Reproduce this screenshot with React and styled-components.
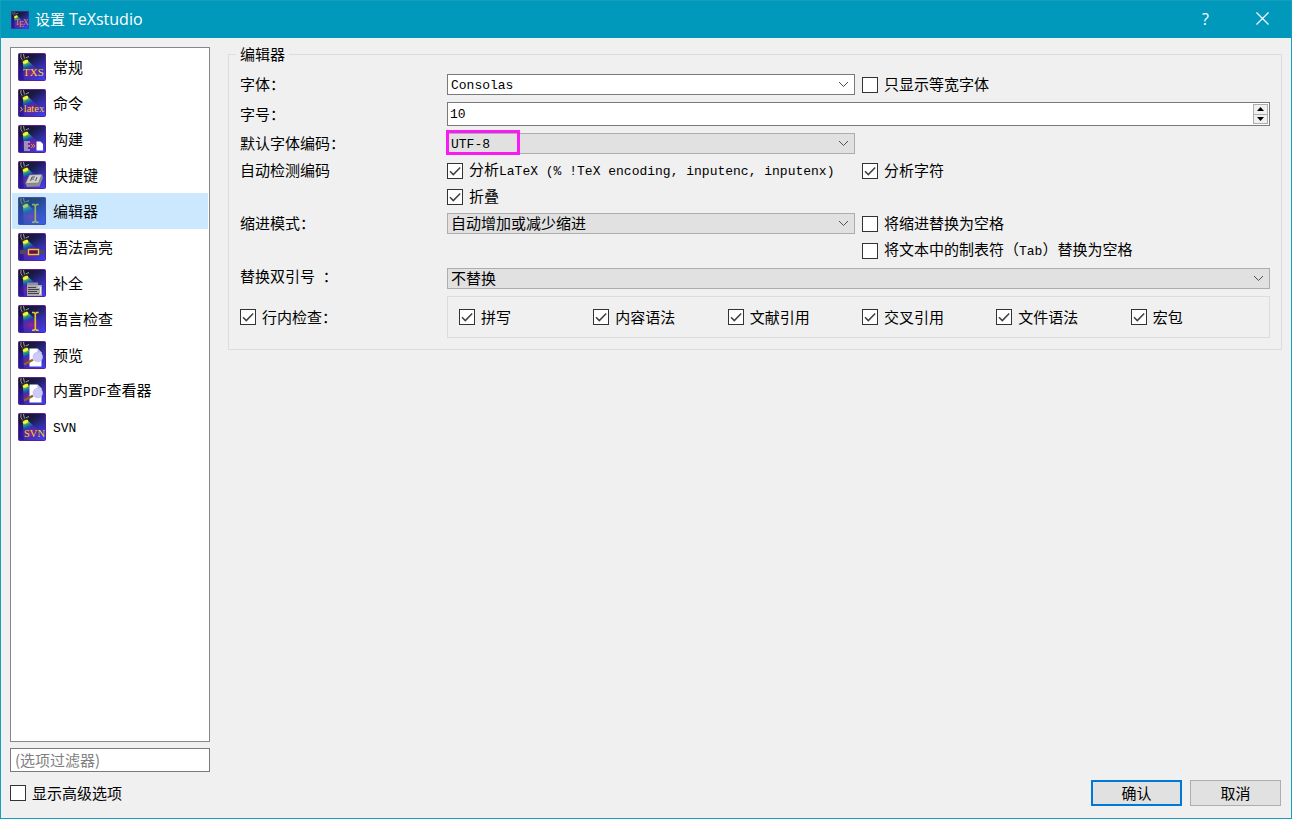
import React from "react";
import styled, { createGlobalStyle } from "styled-components";

const CJK = `"Noto Sans CJK SC", sans-serif`;
const MONO = `"Liberation Mono", "Noto Sans CJK SC", monospace`;

const GlobalStyle = createGlobalStyle`
  *, *::before, *::after { box-sizing: border-box; }
  body { margin: 0; background: #f0f0f0; }
  button, input, select { font: inherit; color: inherit; margin: 0; border-radius: 0; }
`;

const Window = styled.div`
  display: flex;
  flex-direction: column;
  min-height: 100vh;
  border: 1px solid #169fbc;
  background: #f0f0f0;
  color: #000;
  font-family: ${CJK};
  font-size: 15px;
  line-height: 19px;
`;

const TitleBar = styled.header`
  display: flex;
  align-items: center;
  height: 37px;
  padding-left: 10px;
  background: #0099bc;
  color: #fff;
`;

const Title = styled.h1`
  flex: 1;
  margin: 0 0 0 6px;
  padding-bottom: 2px;
  font: 400 15px/20px "Open Sans", ${CJK};
`;

const AppName = styled.span`
  font-size: 16px;
`;

const CaptionButton = styled.button`
  display: grid;
  place-items: center;
  width: 57px;
  height: 100%;
  padding: 0 0 2px;
  border: 0;
  background: transparent;
  font: 400 16px/20px "Open Sans", sans-serif;
`;

const Body = styled.main`
  flex: 1;
  display: flex;
  flex-direction: column;
  gap: 8px;
  padding: 9px 9px 12px;
`;

const Panels = styled.div`
  flex: 1;
  display: flex;
  gap: 18px;
`;

const Sidebar = styled.aside`
  flex: none;
  display: flex;
  flex-direction: column;
  gap: 6px;
  width: 200px;
`;

const CategoryList = styled.ul`
  flex: 1;
  margin: 0;
  padding: 1px;
  list-style: none;
  border: 1px solid #828790;
  background: #fff;
`;

const Category = styled.button`
  display: flex;
  align-items: center;
  gap: 7px;
  width: 100%;
  height: 36px;
  padding: 0 6px;
  border: 0;
  text-align: left;
  background: ${(p) => (p.$active ? "#cce8ff" : "transparent")};
`;

const Caption = styled.span`
  display: block;
  padding-bottom: 2px;
  line-height: 19px;
`;

const FilterInput = styled.input`
  width: 100%;
  height: 24px;
  padding: 0 4px 2px;
  border: 1px solid #7a7a7a;
  background: #fff;
  outline: none;
  &::placeholder { color: #808080; opacity: 1; }
`;

const Content = styled.section`
  flex: 1;
  min-width: 0;
`;

const Group = styled.fieldset`
  min-width: 0;
  margin: 0;
  padding: 12px 11px 11px;
  border: 1px solid #dcdcdc;
`;

const Legend = styled.legend`
  margin-left: -4px;
  padding: 0 4px 2px;
  line-height: 13px;
`;

const Form = styled.div`
  display: grid;
  grid-template-columns: 200px minmax(0, 1fr) minmax(0, 1fr);
  gap: 7px;
  align-items: center;
`;

const Cell = styled.div`
  position: relative;
  grid-column: ${(p) => p.$col};
  min-width: 0;
`;

const FieldLabel = styled.label`
  grid-column: 1;
  padding-bottom: 2px;
  line-height: 17px;
`;

const GroupLabel = styled.div`
  grid-column: 1;
  padding-bottom: 2px;
  line-height: 17px;
`;

const Latin = styled.span`
  font-family: ${MONO};
  font-size: 13px;
  line-height: 17px;
  white-space: pre;
`;

const SelectBox = styled.select`
  display: block;
  appearance: none;
  width: 100%;
  height: 21px;
  padding: ${(p) => (p.$latin ? "1px 24px 0 3px" : "0 24px 2px 3px")};
  border: 1px solid ${(p) => (p.$editable ? "#7a7a7a" : "#adadad")};
  background: ${(p) => (p.$editable ? "#fff" : "#e1e1e1")};
  font-family: ${(p) => (p.$latin ? MONO : CJK)};
  font-size: ${(p) => (p.$latin ? "13px" : "15px")};
  line-height: 17px;
  outline: none;
`;

const ArrowSlot = styled.span`
  position: absolute;
  top: 0;
  right: 6px;
  display: flex;
  align-items: center;
  height: 100%;
  pointer-events: none;
`;

const Highlight = styled.span`
  position: absolute;
  top: -3px;
  left: -1px;
  width: 74px;
  height: 25px;
  border: 3px solid #f81cf3;
  pointer-events: none;
`;

const Spin = styled.div`
  display: flex;
  height: 24px;
  padding: 1px;
  border: 1px solid #7a7a7a;
  background: #fff;
`;

const SpinInput = styled.input`
  flex: 1;
  min-width: 0;
  padding: 1px 1px 0;
  border: 0;
  outline: none;
  background: transparent;
  font-family: ${MONO};
  font-size: 13px;
  appearance: textfield;
  &::-webkit-inner-spin-button { appearance: none; margin: 0; }
`;

const SpinButtons = styled.div`
  display: grid;
  grid-template-rows: 1fr 1fr;
  width: 15px;
  background: #adadad;
  border: 1px solid #adadad;
  gap: 1px;
`;

const SpinButton = styled.button`
  display: grid;
  place-items: center;
  min-height: 0;
  padding: 0;
  border: 0;
  background: #f0f0f0;
`;

const CheckLabel = styled.label`
  display: flex;
  align-items: center;
  gap: 6px;
  width: fit-content;
  height: 19px;
  white-space: nowrap;
`;

const CheckInput = styled.input`
  flex: none;
  appearance: none;
  width: 16px;
  height: 16px;
  border: 1px solid #333;
  background: #fff;
`;

const CheckFrame = styled.span`
  display: grid;
  & > * { grid-area: 1 / 1; }
  & > svg { pointer-events: none; visibility: hidden; }
  & > input:checked + svg { visibility: visible; }
`;

const InlineChecks = styled.div`
  display: grid;
  grid-template-columns: repeat(6, minmax(0, 1fr));
  gap: 7px;
  align-items: center;
  height: 42px;
  padding: 0 11px;
  border: 1px solid #dcdcdc;
`;

const Footer = styled.footer`
  display: flex;
  align-items: center;
  gap: 8px;
  padding-right: 1px;
`;

const Spacer = styled.div`
  flex: 1;
`;

const DialogButton = styled.button`
  width: 91px;
  height: 26px;
  padding: 0 0 2px;
  border: ${(p) => (p.$primary ? "2px solid #0078d7" : "1px solid #adadad")};
  background: #e1e1e1;
`;

function Check({ checked, children }) {
  return (
    <CheckLabel>
      <CheckFrame>
        <CheckInput type="checkbox" defaultChecked={checked} />
        <svg width="16" height="16" viewBox="0 0 16 16" fill="none" stroke="#404040" strokeWidth="1.5" aria-hidden="true">
          <path d="M3 8.2 L6.3 11.6 L13.2 4.4" />
        </svg>
      </CheckFrame>
      <Caption>{children}</Caption>
    </CheckLabel>
  );
}

function Select({ id, value, editable, latin }) {
  return (
    <>
      <SelectBox id={id} defaultValue={value} $editable={editable} $latin={latin}>
        <option>{value}</option>
      </SelectBox>
      <ArrowSlot>
        <svg width="11" height="7" viewBox="0 0 11 7" fill="none" stroke="#505050" aria-hidden="true">
          <path d="M1 1 L5.5 5.5 L10 1" />
        </svg>
      </ArrowSlot>
    </>
  );
}

const serif = { fontFamily: "Liberation Serif, serif", fill: "#f0d428", textAnchor: "middle" };

const glyphs = {
  tex: (
    <g {...serif} fill="#d99a4d">
      <text x="10" y="22" fontSize="14">T</text>
      <text x="16.5" y="25" fontSize="13">E</text>
      <text x="23" y="22" fontSize="13">X</text>
    </g>
  ),
  txs: <text {...serif} x="15.5" y="23" fontSize="11">TXS</text>,
  latex: (
    <g>
      <path d="M2.5 18 L4.3 20.2 L2.5 22.4" fill="none" stroke="#e8cf2a" />
      <text {...serif} x="16" y="23" fontSize="10.5">latex</text>
    </g>
  ),
  build: (
    <g>
      <path d="M6 17 H12 M6 19 H10 M6 21 H12 M6 23 H10 M6 25 H12" stroke="#b4b4bc" strokeWidth="1.3" />
      <path d="M13 19 L15 21 L13 23 M15 19 L17 21 L15 23" fill="none" stroke="#c18b48" />
      <path d="M18.5 16.5 H22.5 L25 19 V25.5 H18.5 Z" fill="#fff" />
    </g>
  ),
  key: (
    <g>
      <path d="M11.5 14 L24 13.5 L20.5 22 L7.5 22.5 Z" fill="#cfcfcf" stroke="#808080" strokeWidth=".6" />
      <path d="M7.5 22.5 L20.5 22 L24 13.5 L25 16.5 L21.5 25.5 L9 26 Z" fill="#8c8c8c" />
      <path d="M12.5 20 L14 16 H17 M13.3 18 H16 M17.5 20 L19 16" fill="none" stroke="#555" />
    </g>
  ),
  caret: (
    <path d="M14 7.5 H16 L17.3 8.8 L18.6 7.5 H20.6 M17.3 8.5 V24 M14 25.2 H16 L17.3 24 L18.6 25.2 H20.6" stroke="#ecc81e" strokeWidth="1.6" fill="none" />
  ),
  syntax: (
    <g>
      <rect x="2" y="17" width="6" height="4" fill="#4c4c55" />
      <rect x="22" y="17" width="4" height="4" fill="#4c4c55" />
      <rect x="10.5" y="16.5" width="10" height="5" fill="#64104c" stroke="#ecc522" strokeWidth="1.4" />
    </g>
  ),
  complete: (
    <g>
      <rect x="9" y="13.5" width="11" height="3" fill="#8d8da3" />
      <path d="M9 16 H24 V27 H9 Z" fill="#aaaaae" />
      <path d="M10 18.5 H18 M10 20.5 H21 M10 22.5 H19 M10 24.5 H21" stroke="#44444a" strokeWidth="1.2" />
      <path d="M19.5 18 H22.5 V25 H21" stroke="#eee" fill="none" />
    </g>
  ),
  preview: (
    <g>
      <path d="M11.5 7.5 H19.5 L23.5 11.5 V25.5 H11.5 Z" fill="#fff" />
      <path d="M19.5 7.5 V11.5 H23.5 Z" fill="#b8b8cc" />
      <path d="M6 23.5 L15 18.8" stroke="#8d6718" strokeWidth="2.4" />
      <circle cx="19.8" cy="16" r="4.8" fill="#cbcaf8" stroke="#b5b3ee" strokeWidth=".6" />
    </g>
  ),
  svn: <text {...serif} x="16.5" y="24" fontSize="10.5">SVN</text>,
};

function TileIcon({ kind, size = 28, selected }) {
  const id = React.useId();
  return (
    <svg width={size} height={size} viewBox="0 0 28 28" aria-hidden="true">
      <defs>
        <linearGradient id={`${id}b`} x1=".2" y1="0" x2=".9" y2="1">
          <stop offset="0" stopColor="#15151f" />
          <stop offset=".3" stopColor="#1b1b4c" />
          <stop offset=".6" stopColor="#2f2fa6" />
          <stop offset="1" stopColor="#4040f4" />
        </linearGradient>
        <linearGradient id={`${id}l`} gradientUnits="userSpaceOnUse" x1="7" y1="8" x2="14" y2="25">
          <stop offset="0" stopColor="#e6f03c" />
          <stop offset=".12" stopColor="#6cc23d" />
          <stop offset=".24" stopColor="#1c8a90" />
          <stop offset=".42" stopColor="#2438b8" />
          <stop offset=".65" stopColor="#5b259c" />
          <stop offset="1" stopColor="#4a2ad0" stopOpacity=".3" />
        </linearGradient>
        <radialGradient id={`${id}p`}>
          <stop offset="0" stopColor="#96249a" stopOpacity=".9" />
          <stop offset="1" stopColor="#6a24a8" stopOpacity="0" />
        </radialGradient>
      </defs>
      <rect x=".5" y=".5" width="27" height="27" rx="1" fill={`url(#${id}b)`} />
      <path d="M1 12 L5 10 L6 27 H1 Z" fill="#2410a0" opacity=".6" />
      <path d="M5 10 L10 8 L24 20 L20 26 H6 Z" fill={`url(#${id}l)`} />
      <ellipse cx="13" cy="20" rx="11" ry="7" fill={`url(#${id}p)`} />
      <path d="M3 1 Q2 5 4.5 7 M5.5 1 L6.5 6 M7.5 5 L11 3.5" stroke="#a0a0a0" fill="none" />
      <path d="M3 7.5 L8 4.5 L10.5 7 L5 10 Z" fill="#30332f" />
      <ellipse cx="7.5" cy="8.8" rx="3" ry="1.7" transform="rotate(-20 7.5 8.8)" fill="#f6f43c" />
      {glyphs[kind]}
      <rect x=".5" y=".5" width="27" height="27" rx="1" fill="none" stroke="#5b1f98" />
      {selected && <rect width="28" height="28" rx="1" fill="#2a90d8" opacity=".4" />}
    </svg>
  );
}

const categories = [
  ["txs", "常规"],
  ["latex", "命令"],
  ["build", "构建"],
  ["key", "快捷键"],
  ["caret", "编辑器", true],
  ["syntax", "语法高亮"],
  ["complete", "补全"],
  ["caret", "语言检查"],
  ["preview", "预览"],
  ["preview", <>内置<Latin>PDF</Latin>查看器</>],
  ["svn", <Latin>SVN</Latin>],
];

const inlineChecks = ["拼写", "内容语法", "文献引用", "交叉引用", "文件语法", "宏包"];

export default function App() {
  return (
    <Window>
      <GlobalStyle />
      <TitleBar>
        <TileIcon kind="tex" size={18} />
        <Title>设置 <AppName>TeXstudio</AppName></Title>
        <CaptionButton type="button" aria-label="帮助">?</CaptionButton>
        <CaptionButton type="button" aria-label="关闭">
          <svg width="13" height="13" viewBox="0 0 13 13" stroke="#fff" strokeWidth="1.2" aria-hidden="true">
            <path d="M.5 .5 L12.5 12.5 M12.5 .5 L.5 12.5" />
          </svg>
        </CaptionButton>
      </TitleBar>
      <Body>
        <Panels>
          <Sidebar>
            <CategoryList>
              {categories.map(([kind, name, active], i) => (
                <li key={i}>
                  <Category type="button" $active={active}>
                    <TileIcon kind={kind} selected={active} />
                    <Caption>{name}</Caption>
                  </Category>
                </li>
              ))}
            </CategoryList>
            <FilterInput type="text" placeholder="(选项过滤器)" aria-label="选项过滤器" />
          </Sidebar>
          <Content>
            <Group>
              <Legend>编辑器</Legend>
              <Form>
                <FieldLabel htmlFor="font">字体：</FieldLabel>
                <Cell $col="2"><Select id="font" value="Consolas" editable latin /></Cell>
                <Cell $col="3"><Check>只显示等宽字体</Check></Cell>

                <FieldLabel htmlFor="size">字号：</FieldLabel>
                <Cell $col="2 / -1">
                  <Spin>
                    <SpinInput id="size" type="number" defaultValue="10" />
                    <SpinButtons>
                      <SpinButton type="button" aria-label="增大">
                        <svg width="7" height="4" viewBox="0 0 7 4" aria-hidden="true"><path d="M0 4 L3.5 0 L7 4 Z" /></svg>
                      </SpinButton>
                      <SpinButton type="button" aria-label="减小">
                        <svg width="7" height="4" viewBox="0 0 7 4" aria-hidden="true"><path d="M0 0 L3.5 4 L7 0 Z" /></svg>
                      </SpinButton>
                    </SpinButtons>
                  </Spin>
                </Cell>

                <FieldLabel htmlFor="encoding">默认字体编码：</FieldLabel>
                <Cell $col="2">
                  <Select id="encoding" value="UTF-8" latin />
                  <Highlight />
                </Cell>

                <GroupLabel>自动检测编码</GroupLabel>
                <Cell $col="2">
                  <Check checked>分析<Latin>LaTeX (% !TeX encoding, inputenc, inputenx)</Latin></Check>
                </Cell>
                <Cell $col="3"><Check checked>分析字符</Check></Cell>
                <Cell $col="2"><Check checked>折叠</Check></Cell>

                <FieldLabel htmlFor="indent">缩进模式：</FieldLabel>
                <Cell $col="2"><Select id="indent" value="自动增加或减少缩进" /></Cell>
                <Cell $col="3"><Check>将缩进替换为空格</Check></Cell>
                <Cell $col="3"><Check>将文本中的制表符（<Latin>Tab</Latin>）替换为空格</Check></Cell>

                <FieldLabel htmlFor="quotes">替换双引号<Latin> </Latin>：</FieldLabel>
                <Cell $col="2 / -1"><Select id="quotes" value="不替换" /></Cell>

                <Cell $col="1"><Check checked>行内检查：</Check></Cell>
                <Cell $col="2 / -1">
                  <InlineChecks>
                    {inlineChecks.map((name) => <Check key={name} checked>{name}</Check>)}
                  </InlineChecks>
                </Cell>
              </Form>
            </Group>
          </Content>
        </Panels>
        <Footer>
          <Check>显示高级选项</Check>
          <Spacer />
          <DialogButton type="submit" $primary>确认</DialogButton>
          <DialogButton type="button">取消</DialogButton>
        </Footer>
      </Body>
    </Window>
  );
}
